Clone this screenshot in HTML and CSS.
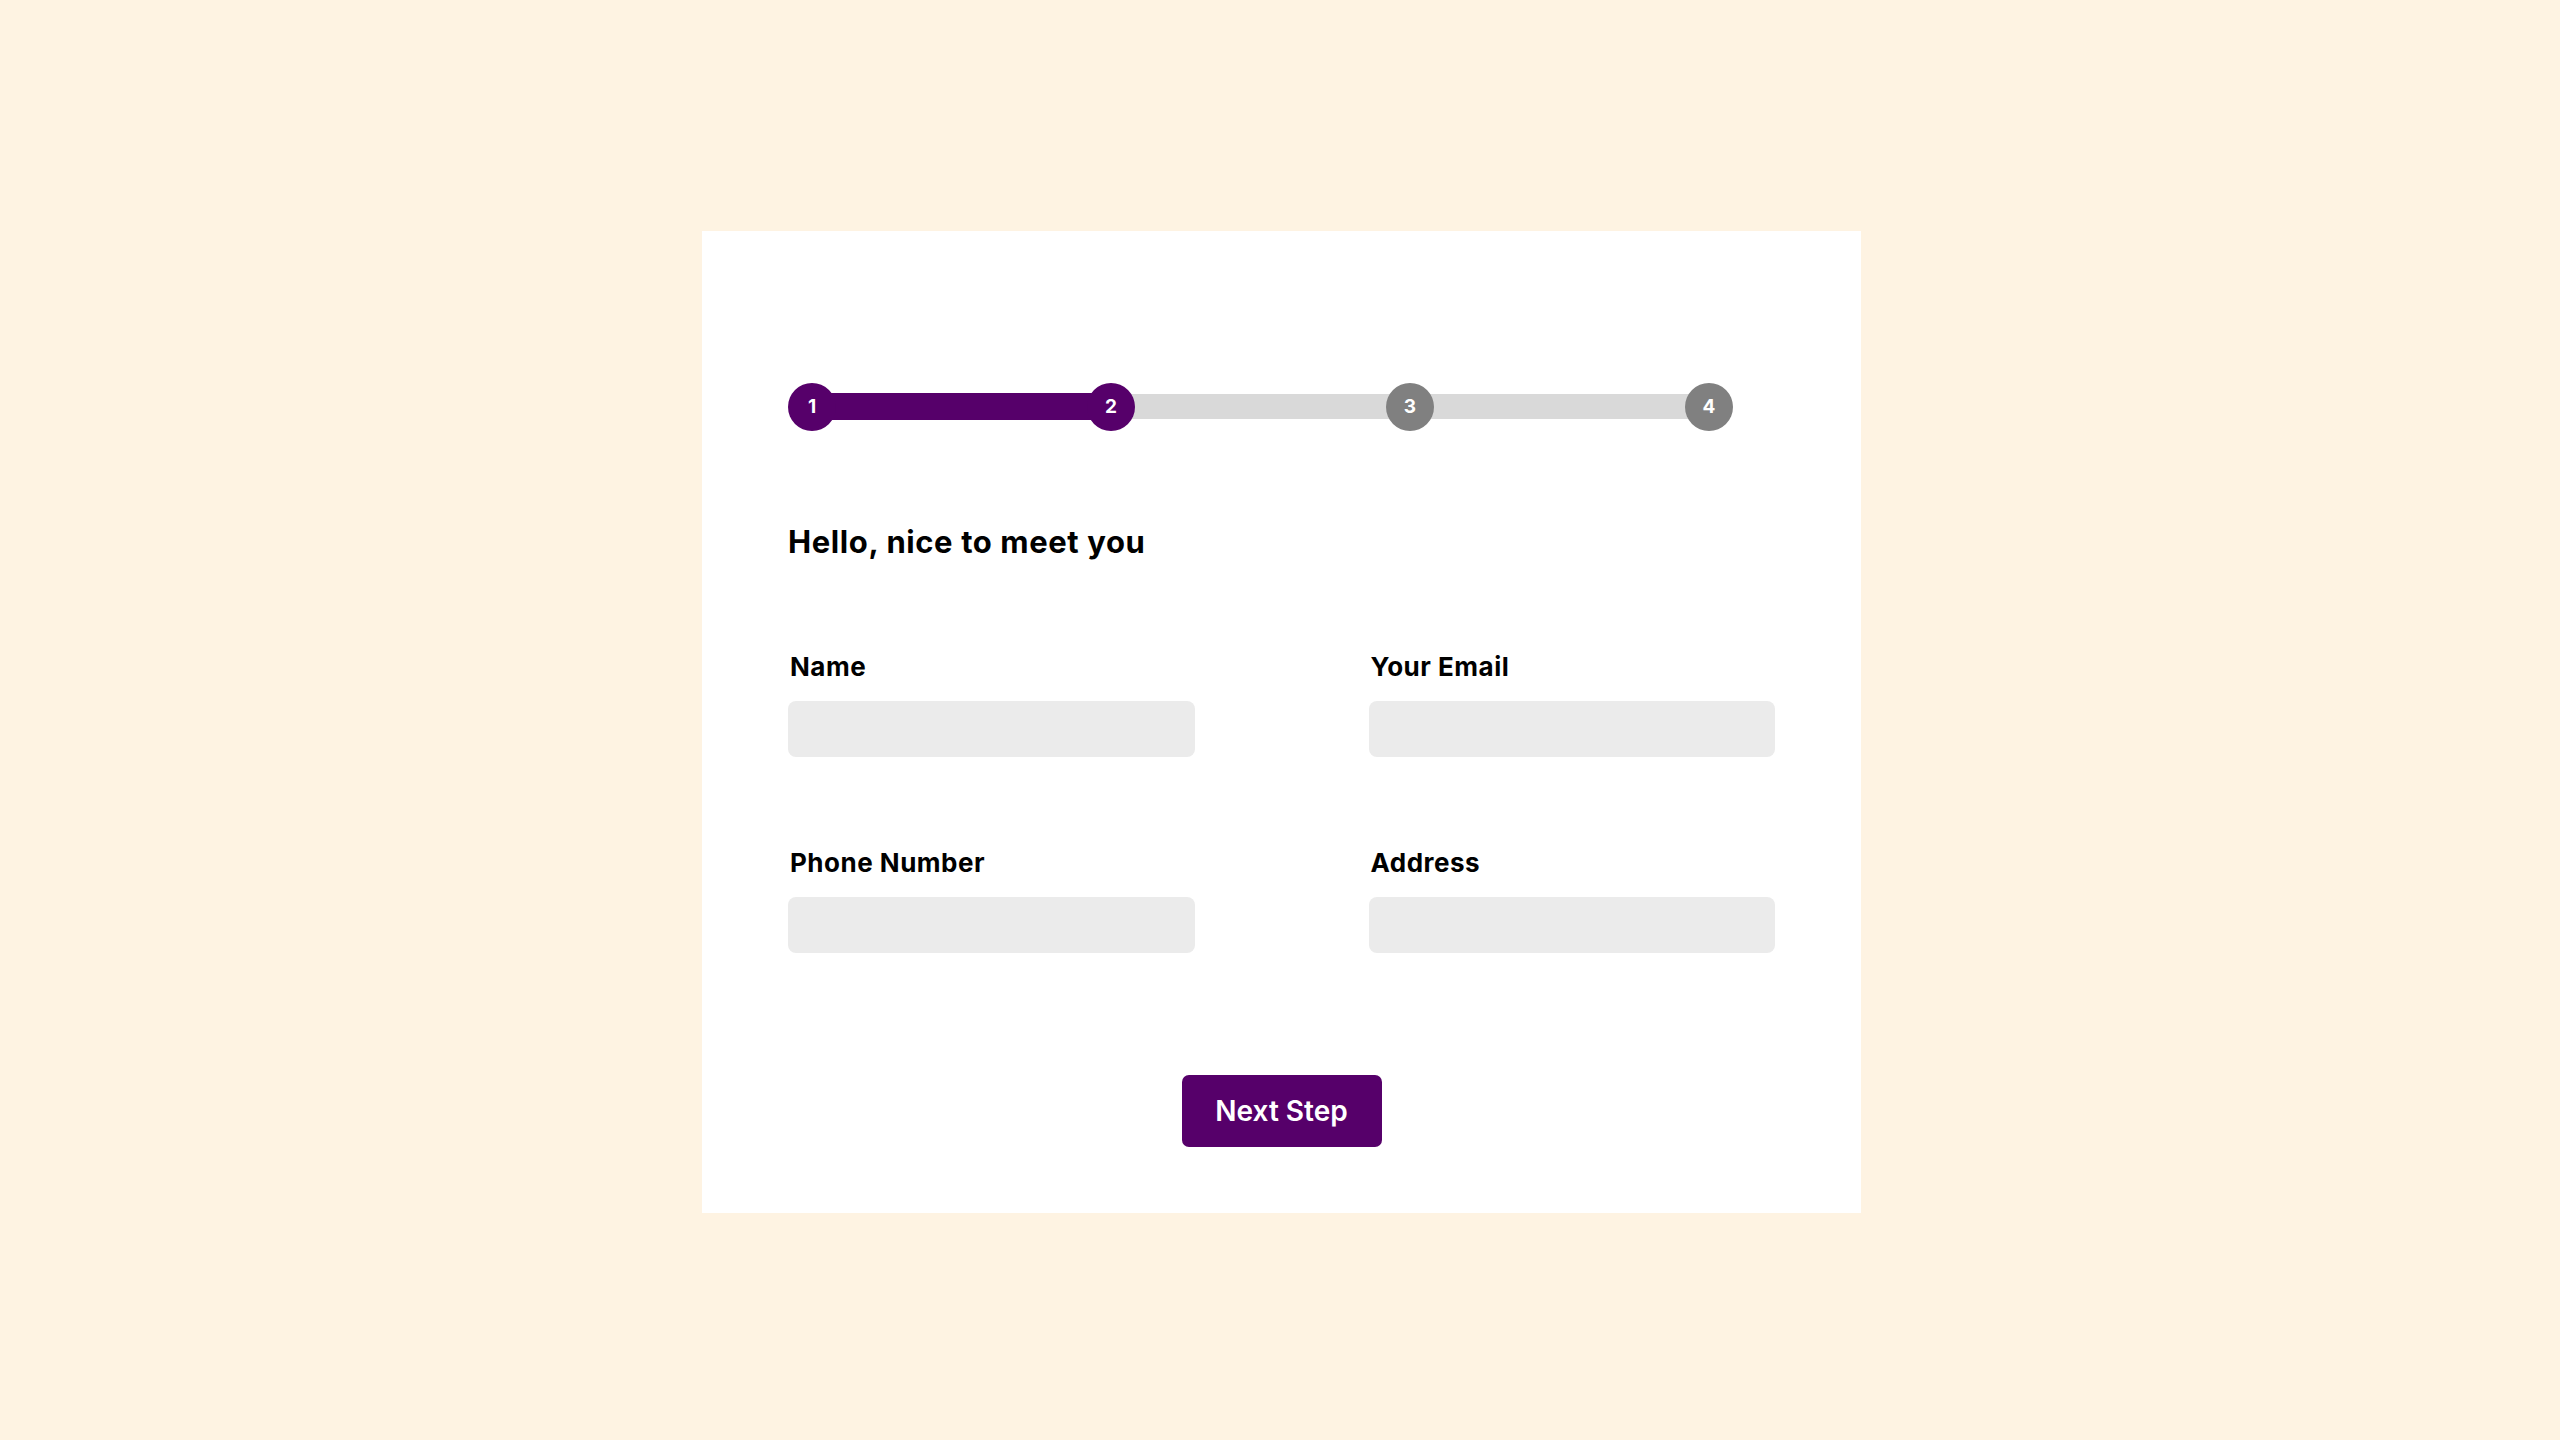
FILE: index.html
```html
<!DOCTYPE html>
<html lang="en">
<head>
<meta charset="utf-8">
<title>Multi-step form</title>
<link rel="stylesheet" href="styles.css">
</head>
<body>
<main class="card">
  <div class="progress">
    <span class="step done">1</span>
    <span class="seg done"></span>
    <span class="step done">2</span>
    <span class="seg"></span>
    <span class="step">3</span>
    <span class="seg"></span>
    <span class="step">4</span>
  </div>
  <h1 class="title">Hello, nice to meet you</h1>
  <form class="fields">
    <label class="field">
      <span class="label">Name</span>
      <input class="input" type="text">
    </label>
    <label class="field">
      <span class="label">Your Email</span>
      <input class="input" type="email">
    </label>
    <label class="field">
      <span class="label">Phone Number</span>
      <input class="input" type="tel">
    </label>
    <label class="field">
      <span class="label">Address</span>
      <input class="input" type="text">
    </label>
  </form>
  <div class="actions">
    <button class="btn" type="button">Next Step</button>
  </div>
</main>
</body>
</html>
```
FILE: styles.css
```css
* { box-sizing: border-box; }
html, body { margin: 0; padding: 0; }
body {
  background: #fef3e2;
  min-height: 100vh;
  padding: 3px 0 0 3px;
  display: flex;
  align-items: center;
  justify-content: center;
  font-family: Inter, "Liberation Sans", sans-serif;
  color: #000;
}
.card {
  width: 1159px;
  height: 982px;
  background: #fff;
  padding: 152px 86px 66px;
  display: flex;
  flex-direction: column;
}
.progress {
  width: 945px;
  height: 48px;
  display: flex;
  align-items: center;
}
.step {
  position: relative;
  z-index: 1;
  flex: 0 0 48px;
  width: 48px;
  height: 48px;
  border-radius: 50%;
  background: #808080;
  color: #fff;
  font-weight: 700;
  font-size: 19px;
  display: flex;
  align-items: center;
  justify-content: center;
}
.step.done { background: #56006a; }
.seg {
  flex: 1;
  height: 25px;
  margin: 0 -14px;
  background: #d9d9d9;
}
.seg.done { background: #56006a; height: 27px; }
.title {
  margin: 92px 0 0;
  font-size: 31px;
  line-height: 38px;
  font-weight: 700;
  letter-spacing: 0.6px;
}
.fields {
  margin: 90px 0 0;
  display: grid;
  grid-template-columns: 1fr 1fr;
  column-gap: 174px;
  row-gap: 90px;
}
.field {
  display: flex;
  flex-direction: column;
  gap: 18px;
}
.label {
  font-size: 26px;
  line-height: 32px;
  font-weight: 700;
  letter-spacing: 0.5px;
  padding-left: 2px;
}
.input {
  display: block;
  width: 100%;
  height: 56px;
  border: 0;
  border-radius: 8px;
  background: #ebebeb;
  margin: 0;
  padding: 0 16px;
  font: inherit;
}
.actions {
  margin-top: 122px;
  display: flex;
  justify-content: center;
}
.btn {
  width: 200px;
  height: 72px;
  border: 0;
  border-radius: 7px;
  background: #56006a;
  color: #fff;
  font-family: Inter, "Liberation Sans", sans-serif;
  font-size: 28px;
  font-weight: 600;
  display: flex;
  align-items: center;
  justify-content: center;
  padding: 0;
}
```
